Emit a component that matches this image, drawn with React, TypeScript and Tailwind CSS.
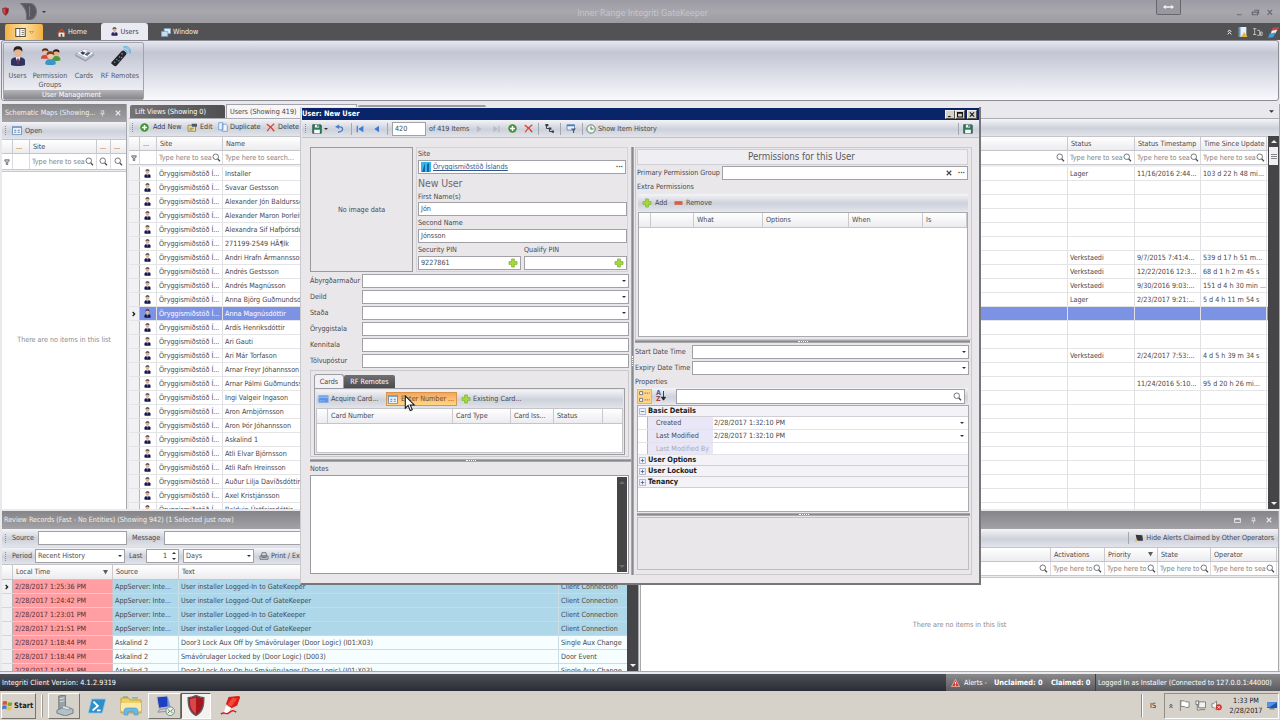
import type { ReactNode } from "react";
import { clsx } from "clsx";

const toolbarBg = "bg-linear-to-b from-[#f4f4f8] via-[#cdd1da] via-55% to-[#e2e4ea]";
const headBg = "bg-linear-to-b from-[#ffffff] to-[#ececf0]";
const panelHead = "bg-linear-to-b from-[#858588] to-[#a3a3a7] text-[#f0f0f2]";

const users = [
  "Installer", "Svavar Gestsson", "Alexander Jón Baldursson", "Alexander Maron Þorleifsson",
  "Alexandra Sif Hafþórsdóttir", "271199-2549 HÃ¶lk", "Andri Hrafn Ármannsson", "Andrés Gestsson",
  "Andrés Magnússon", "Anna Björg Guðmundsdóttir", "Anna Magnúsdóttir", "Ardís Henriksdóttir",
  "Ari Gauti", "Ari Már Torfason", "Arnar Freyr Jóhannsson", "Arnar Pálmi Guðmundsson",
  "Ingi Valgeir Ingason", "Aron Arnbjörnsson", "Aron Þór Jóhannsson", "Askalind 1",
  "Atli Elvar Björnsson", "Atli Rafn Hreinsson", "Auður Lilja Davíðsdóttir", "Axel Kristjánsson", "Baldvin Ústfeirsdóttir",
];

const statuses: Record<number, string[]> = {
  0: ["Lager", "11/16/2016 2:44...", "103 d 22 h 48 mi..."],
  6: ["Verkstaedi", "9/7/2015 7:41:4...", "539 d 17 h 51 m..."],
  7: ["Verkstaedi", "12/22/2016 12:3...", "68 d 1 h 2 m 45 s"],
  8: ["Verkstaedi", "9/30/2016 9:03:...", "151 d 4 h 30 min ..."],
  9: ["Lager", "2/23/2017 9:21:...", "5 d 4 h 11 m 54 s"],
  13: ["Verkstaedi", "2/24/2017 7:53:...", "4 d 5 h 39 m 34 s"],
  15: ["", "11/24/2016 5:10...", "95 d 20 h 26 mi..."],
};

const records = [
  ["2/28/2017 1:25:36 PM", "AppServer: Inte...", "User installer Logged-In to GateKeeper", "Client Connection"],
  ["2/28/2017 1:24:42 PM", "AppServer: Inte...", "User installer Logged-Out of GateKeeper", "Client Connection"],
  ["2/28/2017 1:23:01 PM", "AppServer: Inte...", "User installer Logged-In to GateKeeper", "Client Connection"],
  ["2/28/2017 1:21:51 PM", "AppServer: Inte...", "User installer Logged-Out of GateKeeper", "Client Connection"],
  ["2/28/2017 1:18:44 PM", "Askalind 2", "Door3 Lock Aux Off by Smávörulager (Door Logic) (I01:X03)", "Single Aux Change"],
  ["2/28/2017 1:18:44 PM", "Askalind 2", "Smávörulager Locked by (Door Logic) (D003)", "Door Event"],
  ["2/28/2017 1:18:41 PM", "Askalind 2", "Door3 Lock Aux On by Smávörulager (Door Logic) (I01:X03)", "Single Aux Change"],
];

/* ---------- icons ---------- */

function Person({ className = "size-[9px]", body = "#2b3560" }: { className?: string; body?: string }) {
  return (
    <svg viewBox="0 0 16 20" className={clsx("shrink-0", className)}>
      <path d="M1 19v-4c0-3 3-4 7-4s7 1 7 4v4c-3 1.300-11 1.300-14 0z" fill={body} />
      <path d="M5.500 11l2.500 7 2.500-7z" fill="#e8ecf6" />
      <path d="M7.300 12.500h1.400l.6 4.500-1.300 2-1.300-2z" fill="#6a2f52" />
      <ellipse cx="8" cy="6.500" rx="3.800" ry="4.700" fill="#e3b592" />
      <path d="M3.800 6C3 2 5 .3 8 .3s5 1.700 4.200 5.700c-.8-2-2-2.800-4.200-2.800S4.600 4 3.800 6z" fill="#2a201c" />
    </svg>
  );
}

function Group() {
  return (
    <svg viewBox="0 0 40 34" className="h-[18px] w-[21px]">
      <path d="M2 22c0-6 3-7 8-7s7 2 7 7z" fill="#d5463e" />
      <circle cx="10" cy="9" r="5.500" fill="#e9bb98" />
      <path d="M4 9c-1-5 2-7 6-7s7 2 6 7c-2-3-9-4-12 0z" fill="#5a2d1d" />
      <path d="M23 25c0-6 3-8 8-8s8 2 8 8c-4 2-12 2-16 0z" fill="#4a9b3c" />
      <circle cx="31" cy="11" r="5.500" fill="#e3b08b" />
      <path d="M25 11c-1-5 2-7 6-7s7 2 6 7c-2-3-9-4-12 0z" fill="#2b1c18" />
      <path d="M10 32c0-8 4-9 10-9s10 1 10 9c-4 3-16 3-20 0z" fill="#3796c4" />
      <circle cx="20" cy="16" r="6.500" fill="#f0c7a5" />
      <path d="M13 16c-1-6 2-8 7-8s8 2 7 8c-2-4-11-4-14 0z" fill="#7b3d22" />
    </svg>
  );
}

function Cards() {
  return (
    <svg viewBox="0 0 40 30" className="h-[16px] w-[21px]">
      <path d="M2 12L18 3l20 8-16 12z" fill="#c7ccd6" stroke="#8b93a3" />
      <path d="M2 15l20 11 16-12v-3L22 23 2 12z" fill="#9aa2b2" />
      <path d="M5 9L20 2l18 7-15 10z" fill="#fbfcff" stroke="#9aa3b5" />
      <path d="M12 9l4-3 6 3-5 4z" fill="#33415f" />
      <path d="M20 12l7-5 5 2-7 6z" fill="#596786" />
      <path d="M24 6l4 1-2 2-4-2z" fill="#d49c3a" />
    </svg>
  );
}

function Remote() {
  return (
    <svg viewBox="0 0 40 40" className="size-[21px]">
      <path d="M3 31L22 10c2-2 4-2 6 0l2 2c2 2 2 3 0 5L13 37c-2 2-4 2-6 0l-4-3c-1-1-1-2 0-3z" fill="#23262c" />
      <g fill="#8e949f">
        <circle cx="23" cy="15" r="1.500" /><circle cx="18" cy="21" r="1.300" /><circle cx="22" cy="22" r="1.300" />
        <circle cx="13" cy="26" r="1.300" /><circle cx="17" cy="28" r="1.300" /><circle cx="9" cy="31" r="1.300" />
      </g>
      <path d="M26 7c4 0 7 3 7 7M26 3c7 0 11 5 11 11M25 0c9 0 15 6 15 15" fill="none" stroke="#5fb2e2" strokeWidth="2" />
    </svg>
  );
}

function Search() {
  return (
    <svg viewBox="0 0 12 12" className="size-[9px] shrink-0">
      <circle cx="5" cy="5" r="3.700" fill="#fdfdfd" stroke="#5b5e64" strokeWidth="1.100" />
      <path d="M7.700 8l3 3" stroke="#444" strokeWidth="1.600" />
    </svg>
  );
}

function Funnel() {
  return (
    <svg viewBox="0 0 8 8" className="size-[6px] shrink-0">
      <path d="M1 1h6v1.500L5 4.500V7.500H3v-3L1 2.500z" fill="#bbb" stroke="#555" strokeWidth=".9" />
    </svg>
  );
}

function GreenAdd() {
  return (
    <svg viewBox="0 0 12 12" className="size-[9px] shrink-0">
      <circle cx="6" cy="6" r="5.600" fill="#3f9630" />
      <path d="M6 2.700v6.600M2.700 6h6.600" stroke="#fff" strokeWidth="2" />
    </svg>
  );
}

function Plus() {
  return (
    <svg viewBox="0 0 12 12" className="size-[10px] shrink-0">
      <path d="M4.300 1.200h3.400v3.100h3.100v3.400H7.700v3.100H4.300V7.700H1.200V4.300h3.100z" fill="#a5d93a" stroke="#86b63c" />
    </svg>
  );
}

function RedX() {
  return (
    <svg viewBox="0 0 12 12" className="size-[9px] shrink-0">
      <path d="M1 1.500C5 4 8 7 11 11M11 1C7 4 4 7 1.500 11" stroke="#e2432c" strokeWidth="1.700" fill="none" />
    </svg>
  );
}

function Save() {
  return (
    <svg viewBox="0 0 14 14" className="size-[10px] shrink-0">
      <path d="M1 1h11l1 1v11H1z" fill="#2f7a58" stroke="#1c4a3a" />
      <path d="M4 1h6v4H4z" fill="#e6f2f4" />
      <path d="M3 8h8v5H3z" fill="#f7fbfb" />
      <path d="M7.500 1.500h1.700v2.500H7.500z" fill="#27423b" />
    </svg>
  );
}

function CardForm({ blue = false }: { blue?: boolean }) {
  return blue ? (
    <svg viewBox="0 0 14 11" className="h-[8px] w-[11px] shrink-0">
      <path d="M.5.500h13v10H.5z" fill="#5e93e3" stroke="#88b2ef" />
      <path d="M1 3h12" stroke="#c9ddfa" />
      <path d="M2 8h4m1 0h2" stroke="#a6c6f5" />
    </svg>
  ) : (
    <svg viewBox="0 0 14 13" className="h-[9px] w-[10px] shrink-0">
      <path d="M.5.500h13v12H.5z" fill="#f0f6fd" stroke="#47719f" />
      <path d="M1 1h12v2H1z" fill="#7aa4d6" />
      <path d="M3 6h3m2 0h3M3 9h3m2 0h3" stroke="#5680b4" strokeWidth="1.500" />
    </svg>
  );
}

function Arrow({ className = "" }: { className?: string }) {
  return (
    <svg viewBox="0 0 8 4" className={clsx("h-[2px] w-[4px] shrink-0", className)}>
      <path d="M0 0h8L4 4z" fill="#333" />
    </svg>
  );
}

function Pin() {
  return (
    <svg viewBox="0 0 8 10" className="h-[7px] w-[5px]">
      <path d="M2 .5h4v5H2zM5.200.5v5M.5 5.500h7M4 5.500V10" fill="none" stroke="#e4e4e8" />
    </svg>
  );
}

function Cross({ color = "#e8e8ec" }: { color?: string }) {
  return (
    <svg viewBox="0 0 8 8" className="size-[6px]">
      <path d="M1 1l6 6M7 1L1 7" stroke={color} strokeWidth="1.500" />
    </svg>
  );
}

function Shield({ className = "" }: { className?: string }) {
  return (
    <svg viewBox="0 0 20 24" className={className}>
      <path d="M1 3c4 0 6-1 9-2.500C13 2 15 3 19 3c0 9-1 16-9 20.500C2 19 1 12 1 3z" fill="#a5161d" stroke="#5b6068" strokeWidth="1.500" />
      <path d="M10 2.500C7.500 3.700 6 4.300 3 4.500 3 12 4 17.500 10 21.500z" fill="#db4545" />
    </svg>
  );
}

/* ---------- shared bits ---------- */

function Grip() {
  return <span className="mr-[3px] ml-[3px] h-[9px] w-0 shrink-0 border-l border-dotted border-[#8b8d96]" />;
}

function Sep() {
  return <span className="h-[12px] w-px shrink-0 bg-[#a4a7b0]" />;
}

function HeadCell({ className, children }: { className?: string; children?: ReactNode }) {
  return (
    <div className={clsx("flex shrink-0 items-center overflow-hidden border-r border-[#c9c9ce] pl-[3px] whitespace-nowrap", className)}>
      {children}
    </div>
  );
}

function FilterCell({ className, text = "", icon = true }: { className?: string; text?: string; icon?: boolean }) {
  return (
    <div className={clsx("flex shrink-0 items-center justify-between border-r border-[#dcdce0] pr-[2px] pl-[2px] whitespace-nowrap text-[#808084]", className)}>
      <span>{text}</span>
      {icon && <Search />}
    </div>
  );
}

function Field({ className, children }: { className?: string; children?: ReactNode }) {
  return (
    <div className={clsx("flex h-[14px] items-center border border-[#a0a0a6] bg-white px-[2px]", className)}>{children}</div>
  );
}

function ScrollBar({ thumb = false, dim = false }: { thumb?: boolean; dim?: boolean }) {
  return (
    <div className="flex h-full flex-col items-center bg-[#454547]">
      <svg viewBox="0 0 8 4" className="my-[4px] h-[3px] w-[6px] shrink-0">
        <path d="M0 4h8L4 0z" fill={dim ? "#6d6d70" : "#f0f0f2"} />
      </svg>
      {thumb && (
        <div className="flex h-[18px] w-[9px] flex-col items-center justify-center gap-px bg-[#f0f0f3]">
          <i className="h-px w-[6px] bg-[#85858a]" />
          <i className="h-px w-[6px] bg-[#85858a]" />
          <i className="h-px w-[6px] bg-[#85858a]" />
        </div>
      )}
      <span className="flex-1" />
      <svg viewBox="0 0 8 4" className="my-[4px] h-[3px] w-[6px] shrink-0">
        <path d="M0 0h8L4 4z" fill={dim ? "#6d6d70" : "#f0f0f2"} />
      </svg>
    </div>
  );
}

function SplitBar({ className }: { className?: string }) {
  return (
    <div className={clsx("flex h-[3px] items-center justify-center border-y border-[#a7a7ab] bg-[#8a8a8e]", className)}>
      <span className="w-[10px] border-t border-dotted border-white" />
    </div>
  );
}

/* ---------- top ---------- */

function TitleBar() {
  return (
    <div className="flex h-[23px] shrink-0 bg-linear-to-b from-[#9c9ba3] via-[#a8a7ae] to-[#9d9ca1]">
      <div className="flex w-[60px] items-center">
        <Shield className="ml-[2px] h-[9px] w-[7px]" />
        <svg viewBox="0 0 16 16" className="ml-[11px] h-[17px] w-[17px]">
          <path d="M0 0h8c10 0 10 16 0 16H6C7 9 5 4 0 0z" fill="#57585f" stroke="#6f7077" />
          <path d="M9 3v10" stroke="#7f8087" />
        </svg>
        <Arrow className="ml-[5px]" />
      </div>
      <div className="flex flex-1 items-center justify-center pt-[3px] pl-[70px] text-[9px] tracking-[-0.1px] text-[#c6c5cc]">
        Inner Range Integriti GateKeeper
      </div>
      <div className="flex w-[125px]">
        <div className="ml-px flex h-[15px] w-[25px] items-center justify-center rounded-b-[2px] border border-t-0 border-[#66666c] bg-[#98979d]">
          <svg viewBox="0 0 20 10" className="h-[6px] w-[11px]">
            <path d="M0 5l5-4v2.700h10V1l5 4-5 4V6.300H5V9z" fill="#f4f4f6" />
          </svg>
        </div>
        <svg viewBox="0 0 44 10" className="mt-[8px] ml-[53px] h-[9px] w-[42px]" fill="none" stroke="#686870">
          <path d="M2 7.500h5M21 2.500h5v4M19 4.500h6v3h-6zM36 2l5 5.500M41 2l-5 5.500" strokeWidth="1.300" />
        </svg>
      </div>
    </div>
  );
}

function MenuBar() {
  return (
    <div className="flex h-[17px] shrink-0 items-end bg-[#525254] pl-[5px] text-[#f1f1f1]">
      <div className="flex h-[16px] w-[38px] items-center justify-center gap-[3px] rounded-t-[2px] bg-linear-to-r from-[#f3b040] via-[#fde3a0] to-[#f3b040]">
        <svg viewBox="0 0 14 12" className="h-[9px] w-[11px]">
          <path d="M.7.700h12.600v10.600H.7z" fill="#fff" stroke="#55503f" strokeWidth="1.400" />
          <path d="M6 1v10M8.500 3.500h3M8.500 6h3M8.500 8.500h3" stroke="#55503f" />
        </svg>
        <svg viewBox="0 0 8 5" className="h-[3px] w-[5px]"><path d="M1 .5h6L4 4z" fill="#fff" stroke="#92601a" /></svg>
      </div>
      <div className="ml-[14px] flex h-[16px] w-[44px] items-center gap-[2px]">
        <svg viewBox="0 0 12 12" className="size-[9px]">
          <path d="M2 6v5.500h3V8h2v3.500h3V6z" fill="#f2e2d3" />
          <path d="M0 6.500L6 .5l6 6-1 1-5-4.500L1 7.500z" fill="#d9482b" />
        </svg>
        Home
      </div>
      <div className="flex h-[17px] w-[47px] items-center justify-center gap-[3px] rounded-t-[3px] bg-[#e9eaf2] text-[#444]">
        <Person className="h-[9px] w-[7px]" body="#1c2560" />
        Users
      </div>
      <div className="ml-[13px] flex h-[16px] flex-1 items-center gap-[2px]">
        <svg viewBox="0 0 14 12" className="h-[9px] w-[10px]">
          <path d="M4.500.500h9v7h-9z" fill="#e3eef8" stroke="#7da7cb" />
          <path d="M.5 4.500h9v7h-9z" fill="#c7dcee" stroke="#6d9bc4" />
        </svg>
        Window
      </div>
      <div className="flex h-[16px] items-center gap-[5px] pr-px">
        <svg viewBox="0 0 8 10" className="mr-px h-[6px] w-[5px]" fill="none" stroke="#fff" strokeWidth="1.500"><path d="M1 5l3-3.500L7 5M1 9l3-3.500L7 9" /></svg>
        <svg viewBox="0 0 12 12" className="size-[10px]"><path d="M1 0h9v12H1z" fill="#e6f0fa" /><path d="M1 0h2v12H1z" fill="#5b98d2" /><path d="M7.500 6l4 6h-8z" fill="#e5b73c" /></svg>
        <svg viewBox="0 0 12 12" className="size-[10px]" fill="none" stroke="#ccc"><path d="M0 2h4M2 2v7M0 9h4M5 4h3v6H5M9 6h2v4H9z" /></svg>
        <svg viewBox="0 0 12 12" className="size-[11px]"><path d="M5 1l7-1-2 5-6 1z" fill="#d9423c" /><path d="M4 4l6-1-2 4-5 1z" fill="#eceff4" /><path d="M2 7l6-1-2 5-6 1z" fill="#39a1dc" /></svg>
      </div>
    </div>
  );
}

function Ribbon() {
  return (
    <div className="h-[62px] shrink-0 bg-[#e9e8ec] px-px">
      <div className="h-[61px] rounded-[3px] border border-[#8c8c94] bg-linear-to-b from-[#e6e8f1] from-0% via-[#c3c6d3] via-20% to-[#f9f9fd] pt-px pl-px">
        <div className="flex h-[58px] w-[141px] flex-col justify-between rounded-[2px] border border-[#a2a4ad] text-[#55555d]">
          <div className="flex pt-[3px] text-center leading-[9px]">
            <div className="flex w-[27px] flex-col items-center gap-[5px]"><Person className="h-[20px] w-[16px]" />Users</div>
            <div className="flex w-[38px] flex-col items-center gap-[5px]"><span className="flex h-[20px] items-center"><Group /></span>Permission Groups</div>
            <div className="flex w-[30px] flex-col items-center gap-[5px]"><span className="flex h-[20px] items-center"><Cards /></span>Cards</div>
            <div className="flex w-[42px] flex-col items-center gap-[5px] whitespace-nowrap"><span className="flex h-[20px] items-center"><Remote /></span>RF Remotes</div>
          </div>
          <div className="flex h-[9px] items-center justify-center bg-linear-to-b from-[#b5b5b9] to-[#88888c] pr-[4px] text-white">User Management</div>
        </div>
      </div>
    </div>
  );
}

/* ---------- background panels ---------- */

function SchematicMaps() {
  return (
    <div className="flex w-[125px] flex-col border-r border-[#a8a8ac] bg-white">
      <div className={clsx("flex h-[18px] shrink-0 items-center pl-[3px]", panelHead)}>
        <span className="w-[95px] whitespace-nowrap">Schematic Maps (Showing...</span>
        <Pin />
        <span className="ml-[10px]"><Cross /></span>
      </div>
      <div className={clsx("flex h-[17px] shrink-0 items-center gap-[3px]", toolbarBg)}>
        <Grip /><CardForm />Open
      </div>
      <div className={clsx("flex h-[15px] shrink-0 border-y border-[#c4c4c9]", headBg)}>
        <HeadCell className="w-[11px]" />
        <HeadCell className="w-[17px]">...</HeadCell>
        <HeadCell className="w-[67px]">Site</HeadCell>
        <HeadCell className="w-[14px]">...</HeadCell>
        <HeadCell className="w-[14px] border-r-0">...</HeadCell>
      </div>
      <div className="flex h-[15px] shrink-0">
        <div className="flex w-[11px] items-center justify-center border-r border-[#dcdce0]"><Funnel /></div>
        <FilterCell className="w-[17px]" icon={false} />
        <FilterCell className="w-[67px]" text="Type here to sea" />
        <FilterCell className="w-[14px]" />
        <FilterCell className="w-[14px] border-r-0" />
      </div>
      <div className="h-[3px] shrink-0 border-y border-[#c9c9cd] bg-[#ececef]" />
      <div className="flex h-[335px] items-center justify-center text-[#8b8b8f]">There are no items in this list</div>
    </div>
  );
}

function UserList() {
  return (
    <div className="flex min-w-0 flex-1 flex-col border-r border-[#a8a8ac]">
      <div className="flex h-[14px] shrink-0 items-end gap-px pl-px">
        <div className="flex h-[13px] w-[95px] items-center rounded-t-[2px] bg-linear-to-r from-[#747477] to-[#505053] pl-[5px] text-white">Lift Views (Showing 0)</div>
        <div className="flex h-[14px] w-[131px] items-center border border-b-0 border-[#a2a2a8] bg-[#f6f5f8] pl-[3px]">Users (Showing 419)</div>
        <div className="h-[13px] w-[128px] rounded-t-[2px] bg-[#9c9ca0]" />
        <span className="flex flex-1 items-center justify-end self-center pr-[5px]"><Arrow className="h-[3px] w-[5px]" /></span>
      </div>
      <div className={clsx("flex h-[18px] shrink-0 items-center border-t border-[#acacb2] pb-px text-[#3c3c40]", toolbarBg)}>
        <Grip />
        <span className="ml-[4px] flex w-[47px] items-center gap-[4px] whitespace-nowrap"><GreenAdd />Add New</span>
        <span className="flex w-[31px] items-center gap-[2px]">
          <svg viewBox="0 0 14 12" className="h-[9px] w-[11px] shrink-0"><path d="M1 3h10v8H1z" fill="#eddf9a" stroke="#7d7450" /><path d="M6 1h7v4H6z" fill="#4b5a72" /><path d="M3 7h6M3 9h4" stroke="#7f744c" /></svg>
          Edit
        </span>
        <span className="flex w-[48px] items-center gap-[2px]">
          <svg viewBox="0 0 14 14" className="size-[10px]"><path d="M1 1h6v10H1zM6 3h5l2 2v8H6z" fill="#eef5fd" stroke="#5a8dc9" /></svg>
          Duplicate
        </span>
        <span className="flex items-center gap-[3px]"><RedX />Delete</span>
      </div>
      <div className="flex min-h-0 flex-1">
        <div className="flex min-w-0 flex-1 flex-col overflow-hidden bg-white">
          <div className={clsx("flex h-[15px] shrink-0 border-y border-[#c4c4c9]", headBg)}>
            <HeadCell className="w-[11px]" />
            <HeadCell className="w-[17px]">...</HeadCell>
            <HeadCell className="w-[66px]">Site</HeadCell>
            <HeadCell className="w-[845px]">Name</HeadCell>
            <HeadCell className="w-[67px]">Status</HeadCell>
            <HeadCell className="w-[66px]">Status Timestamp</HeadCell>
            <HeadCell className="w-[66px]">Time Since Update</HeadCell>
          </div>
          <div className="flex h-[13px] shrink-0">
            <div className="flex w-[11px] items-center justify-center border-r border-[#dcdce0]"><Funnel /></div>
            <FilterCell className="w-[17px]" icon={false} />
            <FilterCell className="w-[66px]" text="Type here to sea" />
            <FilterCell className="w-[845px]" text="Type here to search..." />
            <FilterCell className="w-[67px]" text="Type here to sea" />
            <FilterCell className="w-[66px]" text="Type here to sea" />
            <FilterCell className="w-[66px]" text="Type here to sea" />
          </div>
          <div className="h-[3px] shrink-0 border-t border-[#c9c9cd] bg-[#efeff1]" />
          {users.map((name, i) => {
            const selected = i === 10;
            const cell = "flex shrink-0 items-center overflow-hidden border-r pl-[2px] whitespace-nowrap border-[#e1e1e5]";
            return (
              <div key={name} className={clsx("flex h-[14px] shrink-0 border-b border-[#e4e4e7]", selected && "bg-[#7c92e4] text-white")}>
                <div className="flex w-[11px] shrink-0 items-center justify-center border-r border-[#b5b5ba] bg-[#f1f1f4]">
                  {selected && <svg viewBox="0 0 6 8" className="h-[6px] w-[4px]"><path d="M1 1l3 3-3 3" fill="none" stroke="#111" strokeWidth="1.800" /></svg>}
                </div>
                <div className="flex w-[17px] shrink-0 items-center justify-center border-r border-[#e1e1e5] pr-[2px]"><Person className="h-[9px] w-[7px]" body="#12164e" /></div>
                <div className={clsx(cell, "w-[66px]")}>Öryggismiðstöð Í...</div>
                <div className={clsx(cell, "w-[845px]")}>{name}</div>
                <div className={clsx(cell, "w-[67px]")}>{statuses[i]?.[0]}</div>
                <div className={clsx(cell, "w-[66px]")}>{statuses[i]?.[1]}</div>
                <div className={clsx(cell, "w-[66px]")}>{statuses[i]?.[2]}</div>
              </div>
            );
          })}
        </div>
        <div className="w-[11px]"><ScrollBar thumb /></div>
      </div>
    </div>
  );
}

function ReviewRecords() {
  return (
    <div className="flex w-[637px] flex-col border-r border-[#a8a8ac] bg-white">
      <div className={clsx("flex h-[18px] shrink-0 items-center pl-[2px]", panelHead)}>
        Review Records (Fast - No Entities) (Showing 942) (1 Selected just now)
      </div>
      <div className={clsx("flex h-[18px] shrink-0 items-center", toolbarBg)}>
        <Grip />
        <span className="ml-[3px] w-[26px]">Source</span>
        <Field className="w-[89px]" />
        <span className="ml-[5px] w-[32px]">Message</span>
        <Field className="w-[300px]" />
      </div>
      <div className={clsx("flex h-[17px] shrink-0 items-center border-t border-[#dedee4]", toolbarBg)}>
        <Grip />
        <span className="ml-[3px] w-[23px]">Period</span>
        <Field className="w-[90px] justify-between"><span>Recent History</span><Arrow /></Field>
        <span className="ml-[4px] w-[17px]">Last</span>
        <Field className="w-[33px] justify-end gap-[5px]">
          1
          <span className="flex flex-col gap-[4px]"><Arrow className="rotate-180" /><Arrow /></span>
        </Field>
        <Field className="ml-[4px] w-[71px] justify-between"><span>Days</span><Arrow /></Field>
        <svg viewBox="0 0 14 12" className="mr-[2px] ml-[5px] h-[8px] w-[10px]"><path d="M4 1h6l1 5H3zM1 6h12v5H1z" fill="#d5d7dd" stroke="#4d5058" /><path d="M3 8.500h8" stroke="#333" /></svg>
        Print / Export
      </div>
      <div className="flex min-h-0 flex-1">
        <div className="flex w-[625px] shrink-0 flex-col overflow-hidden">
          <div className={clsx("flex h-[16px] shrink-0 border-y border-[#c4c4c9]", headBg)}>
            <HeadCell className="w-[11px]" />
            <HeadCell className="w-[100px] justify-between pr-[4px]">
              Local Time
              <svg viewBox="0 0 8 8" className="size-[5px]"><path d="M0 0h8L4 7z" fill="#5b5b60" /></svg>
            </HeadCell>
            <HeadCell className="w-[66px]">Source</HeadCell>
            <HeadCell className="w-[380px]">Text</HeadCell>
            <HeadCell className="w-[68px]" />
          </div>
          {records.map((r, i) => (
            <div key={i} className={clsx("flex h-[14px] shrink-0 border-b whitespace-nowrap", i < 4 ? "border-[#c0dde9] bg-[#aed8ea]" : "border-[#cddcde] bg-[#f7feff]")}>
              <div className="flex w-[11px] items-center justify-center border-r border-[#b5b5ba] bg-[#f1f1f4]">
                {i === 0 && <svg viewBox="0 0 6 8" className="h-[6px] w-[4px]"><path d="M1 1l3 3-3 3" fill="none" stroke="#111" strokeWidth="1.800" /></svg>}
              </div>
              <div className="flex w-[100px] items-center border-r border-[#d8b9bf] bg-[#ff9fa4] pl-[2px] text-[#5a2c30]">{r[0]}</div>
              <div className="flex w-[66px] items-center border-r border-[#cadde3] pl-[2px]">{r[1]}</div>
              <div className="flex w-[380px] items-center border-r border-[#cadde3] pl-[2px]">{r[2]}</div>
              <div className="flex w-[68px] items-center pl-[2px]">{r[3]}</div>
            </div>
          ))}
        </div>
        <div className="w-[11px]"><ScrollBar /></div>
      </div>
    </div>
  );
}

function Alerts() {
  return (
    <div className="ml-px flex w-[639px] flex-col border-x border-[#a8a8ac] bg-white">
      <div className={clsx("flex h-[18px] shrink-0 items-center justify-end gap-[10px] pr-[6px]", panelHead)}>
        <svg viewBox="0 0 10 8" className="h-[5px] w-[7px]"><path d="M.5.500h9v7h-9zM.5 2h9" fill="none" stroke="#eee" strokeWidth="1.500" /></svg>
        <Pin />
        <Cross />
      </div>
      <div className={clsx("flex h-[18px] shrink-0 items-center justify-end gap-[2px] pr-[4px]", toolbarBg)}>
        <Sep />
        <svg viewBox="0 0 14 12" className="ml-[3px] h-[8px] w-[10px]"><path d="M2 1l10 1 1 8H4z" fill="#35363c" /><path d="M3 7l3 4H0z" fill="#e3be48" /></svg>
        Hide Alerts Claimed by Other Operators
      </div>
      <div className={clsx("flex h-[15px] shrink-0 border-y border-[#c4c4c9]", headBg)}>
        <HeadCell className="w-[410px]" />
        <HeadCell className="w-[54px]">Activations</HeadCell>
        <HeadCell className="w-[53px] justify-between pr-[4px]">
          Priority
          <svg viewBox="0 0 8 8" className="size-[5px]"><path d="M0 0h8L4 7z" fill="#5b5b60" /></svg>
        </HeadCell>
        <HeadCell className="w-[53px]">State</HeadCell>
        <HeadCell className="w-[66px]">Operator</HeadCell>
      </div>
      <div className="flex h-[13px] shrink-0">
        <FilterCell className="w-[410px]" />
        <FilterCell className="w-[54px]" text="Type here to" />
        <FilterCell className="w-[53px]" text="Type here to" />
        <FilterCell className="w-[53px]" text="Type here to" />
        <FilterCell className="w-[66px]" text="Type here to sea" />
      </div>
      <div className="h-[3px] shrink-0 border-y border-[#c9c9cd] bg-[#ececef]" />
      <div className="flex flex-1 items-center justify-center text-[#8b8b8f]">There are no items in this list</div>
    </div>
  );
}

/* ---------- dialog ---------- */

function DialogToolbar() {
  return (
    <div className={clsx("flex h-[18px] shrink-0 items-center border-b border-[#c2c2ca]", toolbarBg)}>
      <Grip />
      <span className="ml-[3px] flex w-[16px] items-center justify-between"><Save /><Arrow className="w-[3px]" /></span>
      <svg viewBox="0 0 12 12" className="mr-[7px] ml-[7px] size-[9px]"><path d="M4 11c8-1 8-8 1-7" fill="none" stroke="#4a7fc4" strokeWidth="1.800" /><path d="M0 3.500L5.500.5v6z" fill="#4a7fc4" /></svg>
      <Sep />
      <svg viewBox="0 0 12 12" className="ml-[4px] size-[8px]"><path d="M1 1h1.800v10H1zM11 1v10L3.500 6z" fill="#3f78dd" /></svg>
      <svg viewBox="0 0 12 12" className="mr-[6px] ml-[9px] size-[8px]"><path d="M9 1v10L2 6z" fill="#3f78dd" /></svg>
      <Sep />
      <Field className="ml-[4px] w-[34px]">420</Field>
      <span className="ml-[3px] w-[46px] whitespace-nowrap">of 419 Items</span>
      <svg viewBox="0 0 12 12" className="size-[8px]"><path d="M3 1v10l7-5z" fill="#b4bac8" /></svg>
      <svg viewBox="0 0 12 12" className="mr-[8px] ml-[9px] size-[8px]"><path d="M9.500 1h1.800v10H9.500zM2 1v10l6.500-5z" fill="#b4bac8" /></svg>
      <GreenAdd />
      <span className="mr-[5px] ml-[7px]"><RedX /></span>
      <Sep />
      <svg viewBox="0 0 12 12" className="mr-[6px] ml-[6px] size-[9px]"><path d="M2 2v4h4M6 6v4h4" fill="none" stroke="#333" strokeWidth="1.200" /><path d="M.5 0h4v3h-4zM5 4.500h3.500v3H5zM9 8.500h3v3H9z" fill="#3a3d44" /></svg>
      <Sep />
      <svg viewBox="0 0 14 12" className="mr-[5px] ml-[5px] h-[9px] w-[11px]"><path d="M1 1h10v7H1z" fill="#eaf2fb" stroke="#4a7fbc" /><path d="M1 1h10v2H1z" fill="#4a7fbc" /><path d="M6 6h7l-2.500 3v3H9V9z" fill="#555b66" /></svg>
      <Sep />
      <svg viewBox="0 0 12 12" className="mr-[2px] ml-[3px] size-[10px]"><circle cx="6" cy="6" r="5" fill="#eef4ef" stroke="#53665e" /><path d="M6 3v3h3" fill="none" stroke="#348c46" strokeWidth="1.300" /></svg>
      Show Item History
      <span className="flex-1" />
      <Sep />
      <span className="mr-[6px] ml-[4px]"><Save /></span>
    </div>
  );
}

function LeftForm() {
  return (
    <div className="flex w-[321px] shrink-0 flex-col">
      <div className="flex h-[125px] gap-[3px]">
        <div className="flex w-[103px] items-center justify-center border border-[#98989d]">No image data</div>
        <div className="flex w-[212px] flex-col border border-[#d3d3d8] pl-px">
          <span className="flex h-[12px] items-center">Site</span>
          <Field className="h-[13px] w-[208px] justify-between">
            <span className="flex items-center gap-[2px]">
              <svg viewBox="0 0 10 10" className="size-[10px]"><path d="M0 0h10v10H0z" fill="#35b5e8" /><path d="M1 10L4 1v9zM6 10V2l2-1v9z" fill="#1767a8" /></svg>
              <span className="text-[#31568f] underline">Öryggismiðstöð Íslands</span>
            </span>
            <span className="font-bold">···</span>
          </Field>
          <span className="flex h-[17px] items-center pt-[2px] text-[10.500px] tracking-[-0.1px] text-[#6a6a6e]">New User</span>
          <span className="flex h-[11px] items-center">First Name(s)</span>
          <Field className="w-[209px]">Jón</Field>
          <span className="flex h-[13px] items-center">Second Name</span>
          <Field className="w-[209px]">Jónsson</Field>
          <div className="flex h-[13px] items-center"><span className="w-[106px]">Security PIN</span>Qualify PIN</div>
          <div className="flex gap-[3px]">
            <Field className="w-[103px] justify-between"><span>9227861</span><Plus /></Field>
            <Field className="w-[103px] justify-end"><Plus /></Field>
          </div>
        </div>
      </div>
      <div className="mt-[2px] flex flex-col gap-[2px]">
        {["Ábyrgðarmaður", "Deild", "Staða", "Öryggistala", "Kennitala", "Tölvupóstur"].map((label, i) => (
          <div key={label} className="flex h-[14px] items-center">
            <span className="w-[52px] whitespace-nowrap">{label}</span>
            <Field className="w-[267px] justify-end">{i < 3 && <Arrow />}</Field>
          </div>
        ))}
      </div>
      <div className="mt-[2px] flex h-[87px] w-[319px] flex-col border border-[#c9c9ce] px-[3px] pt-[3px]">
        <div className="flex h-[14px] items-end">
          <div className="flex h-[14px] w-[30px] items-center justify-center rounded-t-[3px] border border-b-0 border-[#9d9da2] bg-[#f2f1f5]">Cards</div>
          <div className="flex h-[13px] w-[51px] items-center justify-center rounded-t-[2px] bg-linear-to-b from-[#707074] to-[#4c4c50] text-white">RF Remotes</div>
        </div>
        <div className="flex h-[67px] flex-col border border-[#9d9da2] p-px">
          <div className={clsx("flex h-[18px] items-center", toolbarBg)}>
            <span className="flex w-[70px] items-center gap-[2px] pl-[2px] whitespace-nowrap"><CardForm blue />Acquire Card...</span>
            <span className="flex h-[14px] w-[71px] items-center gap-[3px] border border-[#d6944c] bg-linear-to-b from-[#f5a65f] to-[#ffd685] pl-px whitespace-nowrap text-[#6b4a28]"><CardForm />Enter Number ...</span>
            <span className="ml-[4px] flex items-center gap-[2px]"><Plus />Existing Card...</span>
          </div>
          <div className="h-[45px] border border-[#c4c4c9] bg-white">
            <div className={clsx("flex h-[15px] border-b border-[#c4c4c9]", headBg)}>
              <HeadCell className="w-[11px]" />
              <HeadCell className="w-[125px]">Card Number</HeadCell>
              <HeadCell className="w-[58px]">Card Type</HeadCell>
              <HeadCell className="w-[43px]">Card Iss...</HeadCell>
              <HeadCell className="w-[49px]">Status</HeadCell>
            </div>
          </div>
        </div>
      </div>
      <SplitBar className="mt-[2px]" />
      <span className="flex h-[13px] items-center">Notes</span>
      <div className="flex h-[99px] w-[319px] justify-end border border-[#9a9aa0] bg-white p-px">
        <div className="w-[10px]"><ScrollBar dim /></div>
      </div>
    </div>
  );
}

function PropHead({ title, open = false }: { title: string; open?: boolean }) {
  return (
    <div className="flex h-[11px] shrink-0 items-center gap-[2px] border-b border-[#cfcfd5] bg-[#f3f2f6] pl-px text-[7.400px] font-bold text-[#222]">
      <svg viewBox="0 0 10 10" className="size-[7px]"><path d="M.7.700h8.600v8.600H.7z" fill="#eef0fa" stroke="#98a1c4" /><path d={open ? "M2.500 5h5" : "M2.500 5h5M5 2.500v5"} stroke="#3d4c83" /></svg>
      {title}
    </div>
  );
}

function RightForm() {
  return (
    <div className="flex w-[337px] shrink-0 flex-col border border-l-0 border-[#c9c9ce]">
      <div className="flex h-[192px] flex-col border-b border-l border-[#c9c9ce] pt-px pr-[3px] pl-px">
        <div className="flex h-[16px] items-center justify-center border border-[#cfcfd4] bg-[#efeef2] pr-[2px] text-[9.700px] text-[#5a5a5e]">Permissions for this User</div>
        <div className="mt-px flex h-[14px] items-center">
          <span className="w-[85px] whitespace-nowrap">Primary Permission Group</span>
          <Field className="flex-1 justify-end gap-[6px]"><Cross color="#444" /><span className="font-bold">···</span></Field>
        </div>
        <span className="flex h-[14px] items-center">Extra Permissions</span>
        <div className={clsx("ml-px flex h-[17px] items-center", toolbarBg)}>
          <span className="flex w-[36px] items-center gap-[3px] pl-[4px]"><Plus />Add</span>
          <svg viewBox="0 0 12 6" className="mr-[3px] h-[4px] w-[9px]"><path d="M.5.500h11v5H.5z" fill="#e8593a" stroke="#b9705f" /></svg>
          Remove
        </div>
        <div className="mt-px ml-px h-[125px] border border-[#a9a9ae] bg-white">
          <div className={clsx("flex h-[15px] border-b border-[#c4c4c9]", headBg)}>
            <HeadCell className="w-[12px]" />
            <HeadCell className="w-[43px]" />
            <HeadCell className="w-[69px]">What</HeadCell>
            <HeadCell className="w-[86px]">Options</HeadCell>
            <HeadCell className="w-[74px]">When</HeadCell>
            <HeadCell className="flex-1">Is</HeadCell>
          </div>
        </div>
      </div>
      <SplitBar className="mr-px" />
      {["Start Date Time", "Expiry Date Time"].map((label) => (
        <div key={label} className="mt-[2px] flex h-[14px] items-center">
          <span className="w-[57px] whitespace-nowrap">{label}</span>
          <Field className="w-[277px] justify-end"><Arrow /></Field>
        </div>
      ))}
      <span className="flex h-[13px] items-center">Properties</span>
      <div className={clsx("ml-[2px] flex h-[16px] w-[331px] items-center", toolbarBg)}>
        <svg viewBox="0 0 20 20" className="size-[15px] shrink-0"><path d="M.5.500h19v19H.5z" fill="#ffd58a" stroke="#e09a3c" /><path d="M3.500 3.500h4v4h-4zM3.500 12.500h4v4h-4z" fill="#fff" stroke="#54545c" /><path d="M10 5.500h7M10 14.500h7" stroke="#54545c" strokeDasharray="2 1" /></svg>
        <span className="ml-[4px] flex w-[12px] items-center">
          <span className="flex flex-col text-[7px] leading-[6px] font-bold"><b className="text-[#3659b0]">A</b><b className="text-[#a4453f]">Z</b></span>
          <svg viewBox="0 0 6 12" className="h-[10px] w-[5px]"><path d="M3 0v9M.5 7.500L3 11l2.500-3.500z" fill="#222" stroke="#222" /></svg>
        </span>
        <span className="mr-[4px] ml-[4px]"><Sep /></span>
        <Field className="h-[15px] flex-1 justify-end"><Search /></Field>
        <span className="w-[3px]" />
      </div>
      <div className="mt-px ml-[2px] flex h-[107px] w-[332px] flex-col border border-[#a9a9ae] bg-white">
        <PropHead title="Basic Details" open />
        {["Created", "Last Modified", "Last Modified By"].map((label, i) => (
          <div key={label} className={clsx("flex shrink-0 border-b border-[#e2e2e8] pl-[9px]", i < 2 ? "h-[13px]" : "h-[12px]")}>
            <span className={clsx("flex w-[66px] items-center border-l border-[#b9b9c4] bg-[#e9e7f7] pl-[8px] whitespace-nowrap", i === 2 && "text-[#a9a7b6]")}>{label}</span>
            <span className="flex flex-1 items-center justify-between pr-[4px] pl-px">
              {i < 2 && <><span>2/28/2017 1:32:10 PM</span><Arrow /></>}
            </span>
          </div>
        ))}
        <PropHead title="User Options" />
        <PropHead title="User Lockout" />
        <PropHead title="Tenancy" />
      </div>
      <SplitBar className="mt-px mr-px ml-[2px]" />
      <div className="mt-px ml-[2px] h-[53px] w-[332px] border border-[#bcbcc2]" />
    </div>
  );
}

function NewUserDialog() {
  return (
    <div className="absolute top-[107px] left-[300px] flex h-[478px] w-[681px] flex-col border-r-2 border-b-2 border-l border-[#77777b] border-l-[#c9c9cd] bg-[#e9e7ea] pl-px">
      <div className="mt-px flex h-[12px] shrink-0 items-center justify-between bg-[#0a246a] pr-[2px] text-[7.400px] font-bold text-white">
        User: New User
        <span className="flex">
          {["M2 8h4", "M1.500 2h7v6.500h-7zM1.500 3h7", "M2 2l6 6M8 2l-6 6"].map((d, i) => (
            <svg key={d} viewBox="0 0 10 10" className={clsx("h-[9px] w-[10px] border border-[#f2f0ea] border-r-[#555] border-b-[#555] bg-[#d6d2ca]", i === 2 && "ml-[2px]")}>
              <path d={d} fill="none" stroke="#111" strokeWidth="1.500" />
            </svg>
          ))}
        </span>
      </div>
      <DialogToolbar />
      <div className="mt-[9px] ml-[8px] flex h-[428px]">
        <LeftForm />
        <div className="mr-px flex w-[3px] items-center justify-center border-x border-[#a7a7ab] bg-[#8a8a8e]">
          <span className="h-[10px] border-l border-dotted border-white" />
        </div>
        <RightForm />
      </div>
      <svg viewBox="0 0 12 18" className="absolute top-[288px] left-[103px] h-[17px] w-[12px]">
        <path d="M1 1v13l3-3 2.200 5.500 2.200-1L6.200 10.500h4.300z" fill="#fff" stroke="#111" strokeWidth="1.100" />
      </svg>
    </div>
  );
}

/* ---------- bottom ---------- */

function StatusBar() {
  return (
    <div className="flex h-[17px] shrink-0 items-center bg-linear-to-b from-[#4c4f59] to-[#2b2d35] text-white">
      <span className="flex-1 pl-[2px] tracking-[0.08px]">Integriti Client Version: 4.1.2.9319</span>
      <div className="flex h-full w-[334px] items-center bg-linear-to-b from-[#8a8a8d] to-[#5c5c60]">
        <svg viewBox="0 0 12 11" className="mr-[4px] ml-[5px] h-[8px] w-[9px]"><path d="M6 .5L11.500 10.500H.5z" fill="#d63b32" stroke="#f1c9c4" /><path d="M6 4v3M6 8v1.200" stroke="#fff" strokeWidth="1.300" /></svg>
        <span className="w-[30px]">Alerts -</span>
        <b className="w-[57px] text-[7.400px]">Unclaimed: 0</b>
        <b className="w-[44px] text-[7.400px]">Claimed: 0</b>
        <span className="h-full border-l border-[#3f3f43]" />
        <span className="pl-[2px] whitespace-nowrap">Logged In as Installer (Connected to 127.0.0.1:44000)</span>
      </div>
    </div>
  );
}

function TaskBar() {
  const raised = "border border-white border-r-[#77746e] border-b-[#77746e]";
  return (
    <div className="flex h-[29px] shrink-0 items-center bg-[#d6d2ca] text-[#222]">
      <div className={clsx("ml-px flex h-[26px] w-[35px] items-center gap-px font-bold", raised)}>
        <svg viewBox="0 0 14 14" className="size-[11px]"><path d="M1 2c2-1 4-1 5.500 0L6 6.500C4 5.500 2.500 5.500.5 6.500z" fill="#e2522c" /><path d="M7.500 2.500C9 3.500 11 3.500 13 2.500L12.500 7c-2 1-3.500 1-5.500 0z" fill="#70ad36" /><path d="M.5 7.500c2-1 3.500-1 5.500 0L5.500 12C4 11 2 11 0 12z" fill="#3e7fd0" /><path d="M7 8c2 1 3.500 1 5.500 0L12 12.500c-2 1-4 1-5.500 0z" fill="#f3c02e" /></svg>
        <span className="text-[7.600px]">Start</span>
      </div>
      <span className="ml-[5px] h-[22px] w-[2px] border-l border-white bg-[#9c9992]" />
      <div className={clsx("ml-[5px] flex h-[26px] w-[32px] items-center justify-center", raised)}>
        <svg viewBox="0 0 20 22" className="h-[21px] w-[19px]"><path d="M4 1l7-1v14l-7 2z" fill="#9aa2a7" stroke="#6e777c" /><path d="M5 4l5-1M5 7l5-1" stroke="#dfe5e8" /><path d="M2 16l9-4 8 3v4l-8 3-9-3z" fill="#b4c0c6" stroke="#6c7c86" /><path d="M8 11l7 2v3l-7-2z" fill="#d8e0e4" stroke="#7b8a93" strokeWidth=".6" /></svg>
      </div>
      <div className="flex w-[34px] justify-center">
        <svg viewBox="0 0 20 18" className="h-[16px] w-[18px]"><path d="M4 1h16l-4 16H0z" fill="#2f8fc9" stroke="#9fcbe6" /><path d="M6 4l5 5-6 5M10 14h4" fill="none" stroke="#fff" strokeWidth="2" /></svg>
      </div>
      <div className="flex w-[34px] justify-center pr-px">
        <svg viewBox="0 0 22 20" className="h-[20px] w-[22px]"><path d="M1 4V2h8l1 2h11v13H1z" fill="#efcf6b" stroke="#c49f3a" /><path d="M3 1h5M12 2h6" stroke="#5aa36a" /><path d="M1 7h20v8H1z" fill="#fbe9a5" /><path d="M4 19v-4c0-2 1-3 3-3h8c2 0 3 1 3 3v4h-4v-3H8v3z" fill="#68b8e6" stroke="#4b95c4" strokeWidth=".6" /></svg>
      </div>
      <div className={clsx("flex h-[26px] w-[33px] items-center justify-center", raised)}>
        <svg viewBox="0 0 22 22" className="size-[21px]"><path d="M3 2l11-1 3 11-12 2z" fill="#1d3fc0" stroke="#b9bdc9" /><path d="M14 2v10l3 0z" fill="#7396f2" /><path d="M6 15l8-1 2 3-12 1z" fill="#c8ccd4" stroke="#8b8f99" /><circle cx="17" cy="17" r="4.500" fill="#e9efe9" stroke="#7a867a" /><path d="M14.500 15l2 2-2 2M19.500 15l-2 2 2 2" fill="none" stroke="#3a8a45" /></svg>
      </div>
      <div className="flex h-[26px] w-[30px] items-center justify-center border border-[#5f5c57] border-r-white border-b-white bg-[#f3f2ef]">
        <Shield className="h-[21px] w-[18px]" />
      </div>
      <div className="ml-[4px] flex w-[30px] justify-center">
        <svg viewBox="0 0 22 22" className="size-[21px]"><path d="M9 2l10-1c2 0 2 1 2 2l-3 8-6 3-6-4z" fill="#dc1c18" /><path d="M13 3l-5 7 4 2 6-8z" fill="#f04a3c" /><path d="M6 10l6 4-3 5-6 1z" fill="#fff" stroke="#d8c2c0" /><path d="M1 20c4-3 5 1 8-1s4-4 8-1" fill="none" stroke="#dc1c18" strokeWidth="1.500" /></svg>
      </div>
      <span className="flex-1" />
      <span className="h-[23px] w-[2px] border-l border-[#8f8c86] bg-white" />
      <span className="ml-[7px] w-[14px]">IS</span>
      <div className="mr-[1px] flex h-[26px] w-[115px] items-center border border-[#918e87] border-r-white border-b-white pl-[4px]">
        <svg viewBox="0 0 8 10" className="h-[6px] w-[4px]" fill="none" stroke="#222" strokeWidth="1.500"><path d="M1 5l3-3.500L7 5M1 9l3-3.500L7 9" /></svg>
        <svg viewBox="0 0 12 12" className="ml-[6px] size-[11px]"><path d="M1.500 0v12" stroke="#7b7b7b" /><path d="M2 1h4l1 1h4v6H7L6 7H2z" fill="#fff" stroke="#7b7b7b" /></svg>
        <svg viewBox="0 0 12 12" className="ml-[5px] size-[11px]"><path d="M4 2h7.500v6.500H4zM5 10.500h6M1 1h3v4H1zM2.500 5v6H5" fill="#f2f2f2" stroke="#777" /></svg>
        <svg viewBox="0 0 12 12" className="ml-[5px] size-[11px]"><path d="M1 4h2l3-3v10L3 8H1z" fill="#f5f5f5" stroke="#808080" /><circle cx="8.500" cy="8" r="3.300" fill="#d8302a" /><path d="M7.200 6.700l2.600 2.600M9.800 6.700L7.200 9.300" stroke="#fff" /></svg>
        <div className="ml-[4px] flex w-[40px] flex-col items-center gap-[2px] leading-[8px] whitespace-nowrap"><span>1:33 PM</span><span>2/28/2017</span></div>
        <svg viewBox="0 0 12 10" className="ml-[1px] h-[9px] w-[10px]"><path d="M0 1h12v7H0z" fill="#1a57b5" /><path d="M0 1h12L3 7H0z" fill="#5594e4" /><path d="M3 9h6" stroke="#444" /></svg>
      </div>
    </div>
  );
}

export default function App() {
  return (
    <div className="relative flex h-[720px] w-[1280px] flex-col overflow-hidden bg-[#e9e8ec] font-['DejaVu_Sans_Condensed','DejaVu_Sans',sans-serif] text-[7.200px] leading-none tracking-[-0.03px] text-[#48484c]">
      <TitleBar />
      <MenuBar />
      <Ribbon />
      <div className="mt-[2px] flex h-[405px] shrink-0 gap-[2px] pl-[2px]">
        <SchematicMaps />
        <UserList />
      </div>
      <div className="mt-[2px] flex h-[161px] shrink-0 border-b border-[#a8a8ac] pl-[2px]">
        <ReviewRecords />
        <Alerts />
      </div>
      <div className="h-[2px] shrink-0" />
      <StatusBar />
      <TaskBar />
      <NewUserDialog />
    </div>
  );
}
